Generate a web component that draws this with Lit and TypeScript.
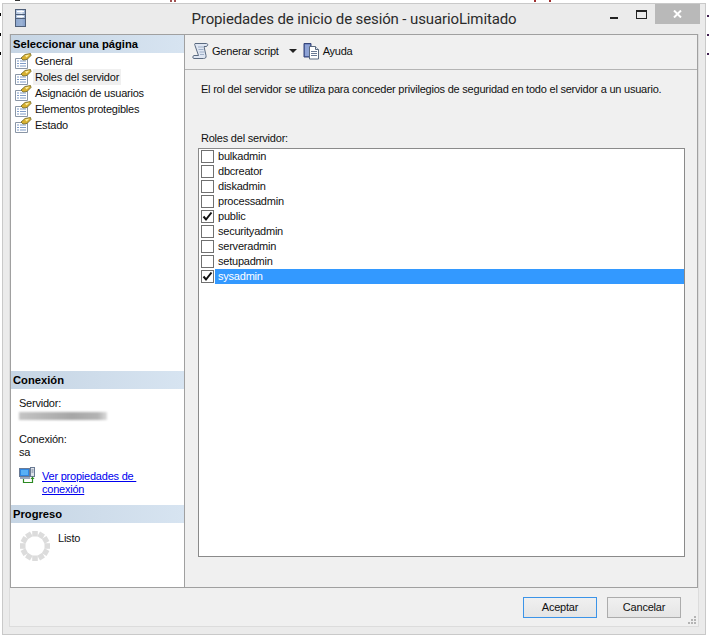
import { LitElement, html, css, svg } from "lit";
import { customElement } from "lit/decorators.js";

const pages = ["General", "Roles del servidor", "Asignación de usuarios", "Elementos protegibles", "Estado"];
const roles: [string, boolean, boolean][] = [
  ["bulkadmin", false, false],
  ["dbcreator", false, false],
  ["diskadmin", false, false],
  ["processadmin", false, false],
  ["public", true, false],
  ["securityadmin", false, false],
  ["serveradmin", false, false],
  ["setupadmin", false, false],
  ["sysadmin", true, true],
];
const marks: [number, number, number, number, string][] = [
  [0, 13, 1, 3, "#000"], [0, 33, 1, 3, "#000"], [0, 52, 1, 3, "#000"],
  [707, 15, 2, 2, "#402050"], [707, 34, 2, 2, "#402050"], [707, 53, 2, 2, "#402050"],
  [15, 0, 5, 1, "#333"], [170, 0, 2, 2, "#a05050"], [174, 0, 2, 2, "#a05050"],
  [534, 0, 2, 2, "#a03030"], [549, 0, 2, 2, "#a03030"],
];

const pageIcon = svg`<svg class="pi" width="18" height="16" viewBox="0 0 18 16">
  <path d="M1.5 5.5H13.5V15.5H1.5Z" fill="#fff" stroke="#8a96a6"/>
  <path d="M3 8h2M6 8h6M3 10.5h2M6 10.5h6M3 13h2M6 13h6" stroke="#7f9cc8"/>
  <path d="M7 5L11 1.5L16.5 .5L17 2.5L13 6.5L9 7Z" fill="#d8b030" stroke="#6f6420" stroke-width=".8"/>
  <path d="M11 2.5L15.5 1.5L12.5 4.5Z" fill="#fff0a0"/>
</svg>`;

const scrollIcon = svg`<svg width="17" height="18" viewBox="0 0 17 18">
  <path d="M3 1.5H14.5C16 1.5 16.5 4 14 4.5L12 4.5L14 13.5C14.5 16 13 16.5 11.5 16.5H2C.5 16.5 .3 14 2 13.5H6.5L3.5 5C3 3 2 2 3 1.5Z" fill="#dfe6f2" stroke="#5a6a80"/>
  <path d="M6 5h5M6.5 7.5h5M7.5 10h5M8 12.5h4" stroke="#9fb0c8"/>
</svg>`;

const helpIcon = svg`<svg width="17" height="18" viewBox="0 0 17 18">
  <path d="M1 1.5H8V15H1Z" fill="#5a70b0" stroke="#36467a"/>
  <path d="M2 2.5H7V14H2Z" fill="#8ea3d6"/>
  <path d="M6.5 4.5H12.5L15.5 7.5V17H6.5Z" fill="#fff" stroke="#5a6a80"/>
  <path d="M12.5 4.5V7.5H15.5" fill="#dfe6f2" stroke="#5a6a80"/>
  <path d="M8 9.5h6M8 11.5h6M8 13.5h6" stroke="#6a7a94"/>
</svg>`;

const serverIcon = svg`<svg width="11" height="18" viewBox="0 0 11 18">
  <defs><linearGradient id="sg" x1="0" x2="1" y1="0" y2="0"><stop offset="0" stop-color="#a9bedd"/><stop offset=".6" stop-color="#dde6f3"/><stop offset="1" stop-color="#8aa2c8"/></linearGradient></defs>
  <rect x=".5" y=".5" width="10" height="17" fill="url(#sg)" stroke="#4f5f78"/>
  <path d="M1 5.5H10M1 9.5H10" stroke="#4f5f78"/>
  <rect x="1" y="10" width="9" height="7" fill="#7f9bc8" opacity=".7"/>
  <rect x="2" y="2" width="7" height="1" fill="#fff"/>
  <rect x="2" y="7" width="7" height="1" fill="#fff"/>
</svg>`;

const connIcon = svg`<svg width="17" height="17" viewBox="0 0 17 17">
  <rect x=".5" y="1.5" width="10" height="8" fill="#2f86e0" stroke="#6a7a94"/>
  <rect x="2" y="3" width="7" height="5" fill="#58b0f5"/>
  <rect x="1" y="10" width="10" height="2" fill="#9aa8bc"/>
  <rect x="11.5" y=".5" width="4" height="9" fill="#dfe3ea" stroke="#6a7a94"/>
  <path d="M12.5 3h2M12.5 5h2" stroke="#6a7a94"/>
  <path d="M4.5 12V15.5H13.5V11" fill="none" stroke="#2c8a22" stroke-width="1.2"/>
  <path d="M11.5 12L13.5 9.5L15.5 12Z" fill="#2c8a22"/>
</svg>`;

const spinner = svg`<svg width="30" height="30" viewBox="0 0 30 30">
  ${Array.from({ length: 12 }, (_, i) => svg`<rect x="12.2" y="0" width="5.6" height="5.5" fill="#dcdcdc" transform="rotate(${i * 30} 15 15)"/>`)}
</svg>`;

const checkIcon = svg`<svg width="11" height="11" viewBox="0 0 11 11"><path d="M1.5 5.5L4 8.5L9.5 1.5" fill="none" stroke="#111" stroke-width="2"/></svg>`;

@customElement("app-root")
export class AppRoot extends LitElement {
  static styles = css`
    :host {
      display: block; position: relative; width: 709px; height: 638px; background: #fff;
      padding: 3px 0 0 2px; box-sizing: border-box; overflow: hidden;
      font: 11px/15px "Liberation Sans", Arial, sans-serif; color: #111; letter-spacing: -.22px;
    }
    .mark { position: absolute; }
    .window {
      width: 704px; height: 632px; box-sizing: border-box; background: #ebebeb;
      border: 1px solid #c9c9c9; padding: 0 6px 7px 6px; display: flex; flex-direction: column;
    }
    .titlebar { height: 30px; display: grid; grid-template-columns: 1fr auto 1fr; margin: 0 -6px 0 -6px; flex: none; }
    .ticon { padding: 5px 0 0 12px; }
    .title { font: 15px/30px Roboto, sans-serif; color: #2b2b2b; letter-spacing: -.12px; }
    .controls { display: flex; justify-content: flex-end; padding-right: 5px; }
    .min { width: 8px; height: 2px; background: #222; margin: 13px 18px 0 0; }
    .max { width: 9px; height: 6px; border: 1px solid #222; border-top-width: 2px; margin: 6px 8px 0 0; }
    .close { width: 45px; height: 20px; background: #b9b9b9; display: flex; align-items: center; justify-content: center; }
    .frame {
      flex: 1; background: #f0f0f0; border: 1px solid #dcdcdc; border-top: 0; display: flex; flex-direction: column; width: 690px; box-sizing: border-box;
    }
    .main { height: 554px; box-sizing: border-box; display: flex; border: 1px solid #a0a0a0; flex: none; }
    .side { width: 173px; flex: none; background: #fff; border-right: 1px solid #a0a0a0; display: flex; flex-direction: column; }
    .hdr { height: 18px; flex: none; background: linear-gradient(90deg, #c6d5e4, #d7e4f1); font-weight: 700; font-size: 11.2px; line-height: 18px; padding-left: 2px; color: #000; letter-spacing: 0; }
    .pages { flex: 1; }
    .page { height: 16px; display: flex; align-items: center; padding-left: 3px; }
    .pi { flex: none; margin-right: 1px; }
    .page span { padding: 0 2px; line-height: 16px; }
    .page.sel span { background: #f0f0f0; }
    .conn { height: 116px; padding: 7px 0 0 8px; box-sizing: border-box; flex: none; }
    .blur { width: 88px; height: 8px; margin: 1px 0 0 0; background: linear-gradient(90deg, #c4c4c4, #a6a6a6 60%, #b4b4b4 90%, #ddd); filter: blur(1.2px); }
    .conn .gap { margin-top: 13px; line-height: 13px; }
    .sa { line-height: 13px; }
    .link { display: flex; gap: 6px; margin-top: 8px; }
    .link a { color: #0000ee; text-decoration: underline; line-height: 13px; padding-top: 3px; white-space: pre; }
    .prog { height: 64px; flex: none; display: flex; padding: 8px 0 0 9px; box-sizing: border-box; gap: 8px; }
    .pane { flex: 1; display: flex; flex-direction: column; }
    .tools { height: 35px; flex: none; box-sizing: border-box; border-bottom: 1px solid #b4b4b4; display: flex; align-items: center; padding: 0 0 2px 7px; }
    .tools .t1 { margin-left: 3px; }
    .arrow { width: 0; height: 0; border: 4px solid transparent; border-top: 4px solid #222; border-bottom: 0; margin: 0 6px 0 10px; }
    .tools .t2 { margin-left: 3px; }
    .body { flex: 1; padding: 12px 12px 30px 13px; display: flex; flex-direction: column; }
    .lbl { margin: 34px 0 2px 3px; }
    .desc { margin-left: 3px; }
    .list { flex: 1; background: #fff; border: 1px solid #8a8a8a; }
    .role { height: 15px; display: flex; align-items: center; padding-left: 2px; }
    .cb { width: 11px; height: 11px; border: 1px solid #707070; background: #fff; flex: none; display: block; }
    .cb svg { display: block; }
    .role span { margin-left: 1px; flex: 1; padding-left: 3px; line-height: 15px; }
    .role.sel span { background: #3399ff; color: #fff; }
    .foot { flex: 1; position: relative; display: flex; justify-content: flex-end; gap: 10px; padding: 9px 17px 0 0; }
    .btn { width: 74px; height: 21px; box-sizing: border-box; border: 1px solid #acacac; background: linear-gradient(#f0f0f0, #e5e5e5); display: flex; align-items: center; justify-content: center; color: #111; }
    .btn.def { border-color: #3c94e8; }
    .grip { position: absolute; right: 1px; bottom: 1px; }
  `;

  render() {
    return html`
      ${marks.map(([x, y, w, h, c]) => html`<i class="mark" style="left:${x}px;top:${y}px;width:${w}px;height:${h}px;background:${c}"></i>`)}
      <div class="window">
        <div class="titlebar">
          <div class="ticon">${serverIcon}</div>
          <div class="title">Propiedades de inicio de sesión - usuarioLimitado</div>
          <div class="controls">
            <div class="min"></div>
            <div class="max"></div>
            <div class="close"><svg width="9" height="8" viewBox="0 0 9 8"><path d="M1 .5L8 7.5M8 .5L1 7.5" stroke="#fff" stroke-width="2"/></svg></div>
          </div>
        </div>
        <div class="frame">
          <div class="main">
            <div class="side">
              <div class="hdr">Seleccionar una página</div>
              <div class="pages">
                ${pages.map((p, i) => html`<div class="page ${i === 1 ? "sel" : ""}">${pageIcon}<span>${p}</span></div>`)}
              </div>
              <div class="hdr">Conexión</div>
              <div class="conn">
                <div>Servidor:</div>
                <div class="blur"></div>
                <div class="gap">Conexión:</div>
                <div class="sa">sa</div>
                <div class="link">${connIcon}<a>${"Ver propiedades de \nconexión"}</a></div>
              </div>
              <div class="hdr">Progreso</div>
              <div class="prog">${spinner}<span>Listo</span></div>
            </div>
            <div class="pane">
              <div class="tools">
                ${scrollIcon}<span class="t1">Generar script</span>
                <i class="arrow"></i>
                ${helpIcon}<span class="t2">Ayuda</span>
              </div>
              <div class="body">
                <div class="desc">El rol del servidor se utiliza para conceder privilegios de seguridad en todo el servidor a un usuario.</div>
                <div class="lbl">Roles del servidor:</div>
                <div class="list">
                  ${roles.map(([r, c, s]) => html`<div class="role ${s ? "sel" : ""}"><i class="cb">${c ? checkIcon : ""}</i><span>${r}</span></div>`)}
                </div>
              </div>
            </div>
          </div>
          <div class="foot">
            <div class="btn def">Aceptar</div>
            <div class="btn">Cancelar</div>
            <svg class="grip" width="9" height="9" viewBox="0 0 9 9" fill="#b4b4b4"><rect x="6" y="0" width="2" height="2"/><rect x="3" y="3" width="2" height="2"/><rect x="6" y="3" width="2" height="2"/><rect x="0" y="6" width="2" height="2"/><rect x="3" y="6" width="2" height="2"/><rect x="6" y="6" width="2" height="2"/></svg>
          </div>
        </div>
      </div>
    `;
  }
}
